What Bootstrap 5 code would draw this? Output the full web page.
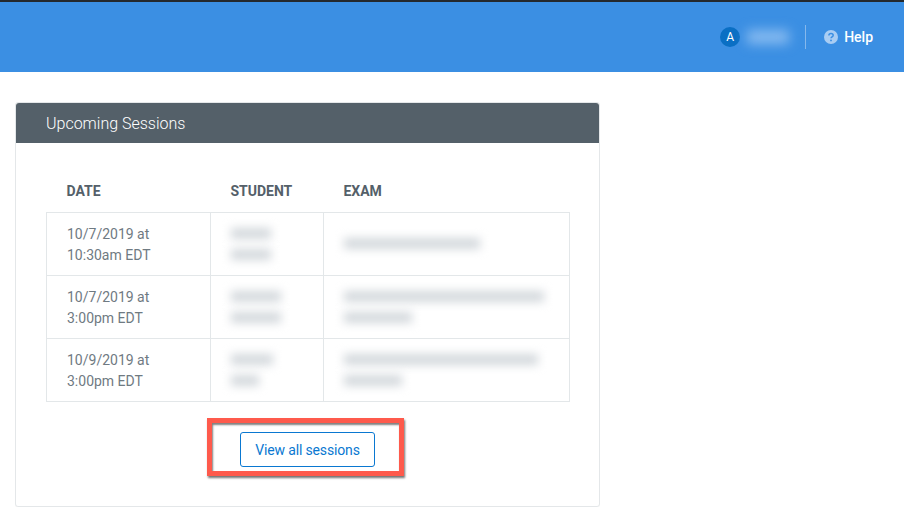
<!DOCTYPE html>
<html lang="en">
<head>
<meta charset="utf-8">
<title>Upcoming Sessions</title>
<link href="https://cdn.jsdelivr.net/npm/bootstrap@5.3.0/dist/css/bootstrap.min.css" rel="stylesheet">
<style>
body{font-family:Roboto,"Liberation Sans",sans-serif;background:#fff;color:#66717a;font-size:14px;overflow:hidden}
.topbar{height:72px;background:#3b8fe3;border-top:2px solid #24292e;padding-right:31px}
.avatar{width:20px;height:20px;border-radius:50%;background:#0a6fc4;color:#fff;font-size:12px;line-height:20px;text-align:center}
.user-name{width:42px;height:14px;margin:0 16px 0 7px;background:#86baf0;filter:blur(6px)}
.vsep{width:1px;height:24px;background:#86b8ec;margin-right:18px}
.help-link{color:#fff;font-size:14px;font-weight:500;gap:6px}
.page-body{padding:30px 0 0 15px}
.sess-card{width:585px;height:405px;border-color:#e4e7e9;border-radius:3px;box-shadow:0 1px 1px rgba(0,0,0,.03)}
.sess-head{height:40px;background:#546069;color:#fff;font-size:16px;font-weight:300;line-height:41px;padding:0 0 0 30px;border:0;border-radius:3px 3px 0 0!important}
.sess-body{padding:0 29px 0 30px}
.sess-table{width:524px;margin:0;table-layout:fixed;border-color:#e3e7e9;--bs-table-color:#66717a}
.sess-table thead tr{border:0}
.sess-table th{border:0;padding:0 0 10px 20px;height:69px;vertical-align:bottom;font-size:14px;font-weight:700;color:#546069;text-transform:uppercase;letter-spacing:-.02px}
.sess-table td{height:63px;padding:11px 20px 9px;line-height:21px;vertical-align:middle;border-color:#e3e7e9;color:#6f7a82}
.c1{width:164px}.c2{width:113px}
.blur-line{height:11px;background:#d3d8dc;filter:blur(5px)}
.blur-line+.blur-line{margin-top:10px}
.blur-cell{padding:10px 12px 10px 20px!important}
.w-n1{width:40px}.w-n2{width:50px}.w-n3{width:42px}.w-n4{width:28px}
.w-e1{width:136px}.w-e2{width:200px}.w-e3{width:68px}.w-e4{width:194px}.w-e5{width:58px}
.mark-box{border:5px solid #fe5a4c;box-shadow:1px 2px 2px rgba(0,0,0,.55),inset 1px 2px 2px rgba(0,0,0,.5);padding:9px 24px 4px 28px;margin:16px 0 0 161px;width:197px;height:58px}
.view-btn{width:135px;height:35px;padding:0;line-height:34px;font-size:14px;letter-spacing:-.15px;color:#0a78d1;border:1px solid #0a78d1;border-radius:3px;background:#fff;display:block}
.view-btn:hover{color:#0a78d1;background:#fff;border-color:#0a78d1}
</style>
</head>
<body>
<header class="topbar d-flex align-items-center justify-content-end">
  <div class="avatar">A</div>
  <div class="user-name"></div>
  <div class="vsep"></div>
  <a class="help-link d-flex align-items-center text-decoration-none" href="#">
    <svg width="14" height="14" viewBox="0 0 14 14" aria-hidden="true"><circle cx="7" cy="7" r="7" fill="#a9cdf3"/><path d="M4.9 5.4c0-1.2 1-1.9 2.1-1.9s2.2.7 2.2 1.8c0 1.6-2.2 1.5-2.2 3" fill="none" stroke="#3b8fe3" stroke-width="1.5"/><circle cx="7" cy="10.4" r=".95" fill="#3b8fe3"/></svg>
    Help
  </a>
</header>
<main class="page-body">
  <section class="card sess-card">
    <div class="card-header sess-head">Upcoming Sessions</div>
    <div class="card-body sess-body">
      <table class="table table-bordered sess-table">
        <colgroup><col class="c1"><col class="c2"><col></colgroup>
        <thead><tr><th>Date</th><th>Student</th><th>Exam</th></tr></thead>
        <tbody>
          <tr>
            <td>10/7/2019 at<br>10:30am EDT</td>
            <td class="blur-cell"><div class="blur-line w-n1"></div><div class="blur-line w-n1"></div></td>
            <td class="blur-cell"><div class="blur-line w-e1"></div></td>
          </tr>
          <tr>
            <td>10/7/2019 at<br>3:00pm EDT</td>
            <td class="blur-cell"><div class="blur-line w-n2"></div><div class="blur-line w-n2"></div></td>
            <td class="blur-cell"><div class="blur-line w-e2"></div><div class="blur-line w-e3"></div></td>
          </tr>
          <tr>
            <td>10/9/2019 at<br>3:00pm EDT</td>
            <td class="blur-cell"><div class="blur-line w-n3"></div><div class="blur-line w-n4"></div></td>
            <td class="blur-cell"><div class="blur-line w-e4"></div><div class="blur-line w-e5"></div></td>
          </tr>
        </tbody>
      </table>
      <div class="mark-box">
        <a class="btn view-btn" href="#">View all sessions</a>
      </div>
    </div>
  </section>
</main>
<script src="https://cdn.jsdelivr.net/npm/bootstrap@5.3.0/dist/js/bootstrap.bundle.min.js"></script>
</body>
</html>
